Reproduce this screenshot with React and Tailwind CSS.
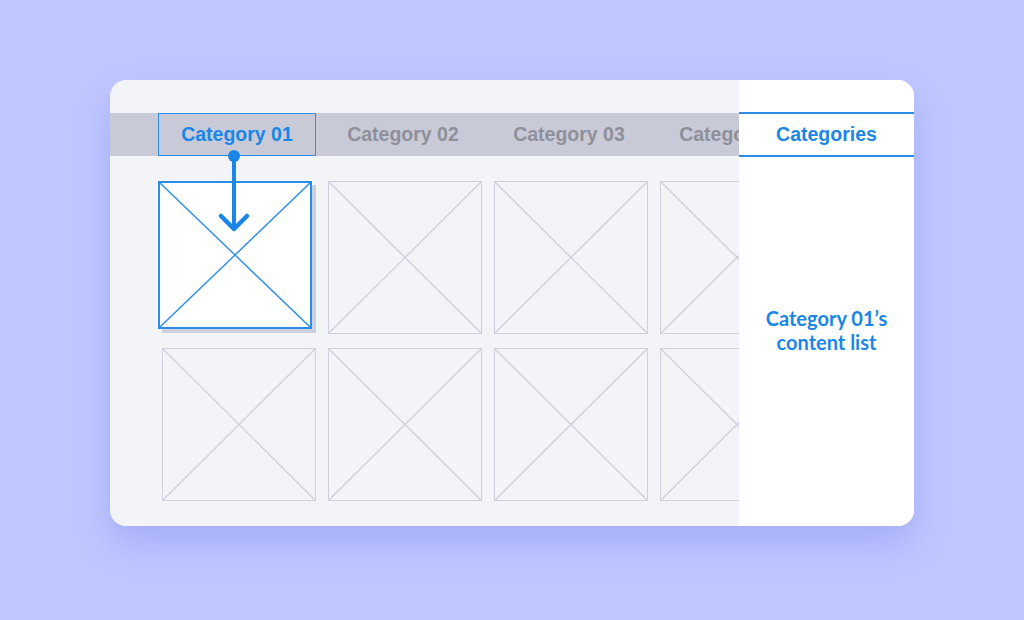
import React from "react";

const tabs = ["Category 01", "Category 02", "Category 03", "Category 04"];

function Placeholder({ active }) {
  const stroke = active ? "#2a8de8" : "#cfd1de";
  return (
    <div
      className={`relative w-[154px] shrink-0 ${
        active
          ? "h-[148px] -translate-x-1 bg-white border-2 border-[#2a8de8] shadow-[4px_4px_0_0_#cdd0de]"
          : "h-[153px] border-[1.5px] border-[#cfd1de]"
      }`}
    >
      <svg className="absolute inset-0 w-full h-full" viewBox="0 0 100 100" preserveAspectRatio="none">
        <line x1="0" y1="0" x2="100" y2="100" stroke={stroke} strokeWidth="1.4" vectorEffect="non-scaling-stroke" />
        <line x1="100" y1="0" x2="0" y2="100" stroke={stroke} strokeWidth="1.4" vectorEffect="non-scaling-stroke" />
      </svg>
    </div>
  );
}

function Arrow() {
  return (
    <svg className="absolute left-[105px] top-[68px]" width="40" height="90" viewBox="0 0 40 90" fill="none">
      <circle cx="19" cy="8" r="6" fill="#1a86e8" />
      <line x1="19" y1="8" x2="19" y2="80" stroke="#1a86e8" strokeWidth="4" strokeLinecap="round" />
      <polyline points="6,68 19,81 32,68" stroke="#1a86e8" strokeWidth="4.5" strokeLinecap="round" strokeLinejoin="round" />
    </svg>
  );
}

export default function App() {
  return (
    <div className="w-[1024px] h-[620px] bg-[#c1c8ff] pt-[80px] pl-[110px]">
      <div className="relative flex w-[804px] h-[446px] rounded-2xl overflow-hidden bg-[#f3f4f8] shadow-[0_18px_40px_rgba(110,120,235,0.35)]">
        {/* left: tabs + grid */}
        <div className="w-[629px] overflow-hidden pt-[33px]">
          <div className="flex gap-[8px] h-[43px] bg-[#c8cad8] pl-[48px] font-['Liberation_Sans',Arial,sans-serif] font-bold text-[19.5px]">
            {tabs.map((t, i) => (
              <div
                key={t}
                className={`w-[158px] shrink-0 flex items-center justify-center whitespace-nowrap ${
                  i === 0 ? "border-[1.5px] border-[#2a8de8] text-[#1a86e8]" : "text-[#8f9099]"
                }`}
              >
                {t}
              </div>
            ))}
          </div>
          <div className="flex flex-col gap-[14px] pt-[25px] pl-[52px]">
            {[0, 1].map((r) => (
              <div key={r} className="flex gap-[12px]">
                {[0, 1, 2, 3].map((c) => (
                  <Placeholder key={c} active={r === 0 && c === 0} />
                ))}
              </div>
            ))}
          </div>
        </div>

        {/* right: categories panel */}
        <div className="w-[175px] bg-white pt-[32px]">
          <div className="h-[45px] border-y-2 border-[#2a8de8] flex items-center justify-center font-['Liberation_Sans',Arial,sans-serif] font-bold text-[19.5px] text-[#1a86e8]">
            Categories
          </div>
          <div className="mt-[149px] text-center font-['Lato',sans-serif] font-bold text-[20px] leading-[24px] text-[#1a86e8]">
            Category 01’s
            <br />
            content list
          </div>
        </div>

        <Arrow />
      </div>
    </div>
  );
}
